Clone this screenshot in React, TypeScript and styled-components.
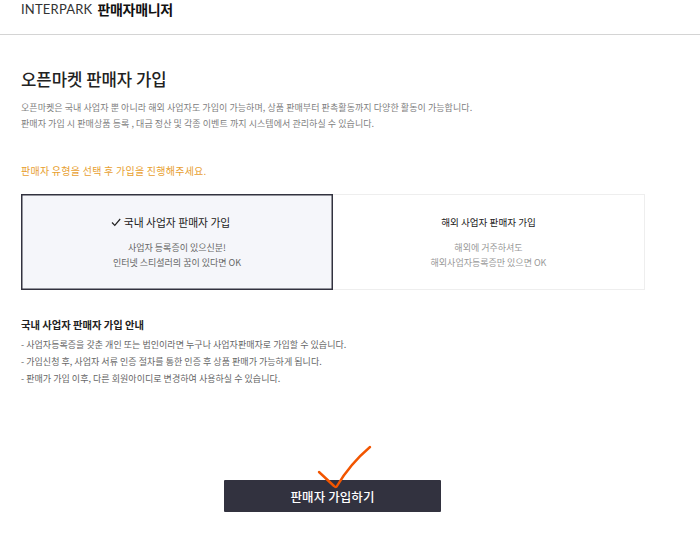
import React from "react";
import styled, { createGlobalStyle } from "styled-components";

const Global = createGlobalStyle`
  html, body { margin: 0; padding: 0; background: #fff; }
  body { font-family: "Noto Sans CJK KR", "Noto Sans", sans-serif; width: 700px; height: 536px; overflow: hidden; }
`;

const Header = styled.header`
  box-sizing: border-box;
  height: 35px;
  border-bottom: 1px solid #d4d4d4;
  padding: 1px 0 0 21px;
  display: flex;
  align-items: flex-start;
  gap: 5px;
`;
const Brand = styled.span`
  font-family: "Lato", sans-serif;
  font-size: 13px;
  line-height: 17px;
  color: #333;
  letter-spacing: 0.2px;
  font-weight: 400;
`;
const BrandKo = styled.span`
  font-size: 14px;
  line-height: 17px;
  font-weight: 700;
  color: #111;
  letter-spacing: -0.3px;
`;
const Main = styled.main`
  padding: 32px 0 0 21px;
  width: 624px;
`;
const Title = styled.h1`
  margin: 0;
  font-size: 16.7px;
  line-height: 24px;
  font-weight: 500;
  color: #222;
`;
const Intro = styled.p`
  margin: 9px 0 0;
  font-size: 9px;
  line-height: 16px;
  color: #808080;
  white-space: nowrap;
  letter-spacing: 0.06px;
`;
const Notice = styled.p`
  margin: 31px 0 0;
  font-size: 10px;
  line-height: 16px;
  color: #e8a02f;
  letter-spacing: 0.25px;
`;
const Options = styled.div`
  display: flex;
  margin-top: 15px;
  height: 96px;
`;
const Option = styled.div<{ $active?: boolean }>`
  box-sizing: border-box;
  width: 312px;
  height: 96px;
  border: ${(p) => (p.$active ? "1px solid #32323f" : "1px solid #eee")};
  border-left-width: ${(p) => (p.$active ? "1px" : "0")};
  background: ${(p) => (p.$active ? "#f5f6fa" : "#fff")};
  box-shadow: ${(p) => (p.$active ? "inset 0 0 0 0.5px #32323f" : "none")};
  text-align: center;
  padding-top: 18px;
`;
const OptionTitle = styled.div<{ $active?: boolean }>`
  font-size: ${(p) => (p.$active ? "10.8px" : "9.6px")};
  line-height: 18px;
  color: #222;
  display: flex;
  justify-content: center;
  align-items: center;
  gap: 3px;
`;
const CheckIcon = styled.svg`
  margin-left: -13px;
  flex: none;
`;
const OptionText = styled.div<{ $muted?: boolean }>`
  margin-top: 9px;
  font-size: 9px;
  line-height: 15px;
  color: ${(p) => (p.$muted ? "#999" : "#666")};
`;
const GuideTitle = styled.h2`
  margin: 28px 0 0;
  font-size: 10.3px;
  line-height: 14px;
  font-weight: 700;
  color: #222;
`;
const GuideList = styled.ul`
  list-style: none;
  margin: 4px 0 0;
  padding: 0;
`;
const GuideItem = styled.li`
  font-size: 9px;
  line-height: 17px;
  color: #666;
  white-space: nowrap;
  letter-spacing: 0.03px;
`;
const ButtonRow = styled.div`
  display: flex;
  justify-content: center;
  margin: 93px 0 0 -21px;
  width: 665px;
`;
const SubmitWrap = styled.div`
  position: relative;
  width: 217px;
  height: 32px;
`;
const Submit = styled.button`
  width: 217px;
  height: 32px;
  border: 0;
  border-radius: 1px;
  background: #32323f;
  color: #fff;
  font-family: inherit;
  font-size: 12.5px;
  font-weight: 500;
  letter-spacing: 0.1px;
  padding: 0;
`;
const Mark = styled.svg`
  position: absolute;
  left: 92px;
  top: -36px;
  width: 60px;
  height: 50px;
  pointer-events: none;
`;

export default function App() {
  return (
    <>
      <Global />
      <Header>
        <Brand>INTERPARK</Brand>
        <BrandKo>판매자매니저</BrandKo>
      </Header>
      <Main>
        <Title>오픈마켓 판매자 가입</Title>
        <Intro>
          오픈마켓은 국내 사업자 뿐 아니라 해외 사업자도 가입이 가능하며, 상품 판매부터 판촉활동까지 다양한 활동이 가능합니다.
          <br />
          판매자 가입 시 판매상품 등록 , 대금 정산 및 각종 이벤트 까지 시스템에서 관리하실 수 있습니다.
        </Intro>
        <Notice>판매자 유형을 선택 후 가입을 진행해주세요.</Notice>
        <Options>
          <Option $active>
            <OptionTitle $active>
              <CheckIcon width="10" height="9" viewBox="0 0 10 9" fill="none" stroke="#222" strokeWidth="1.2">
                <path d="M1 4.5 L3.8 7.3 L9.2 1" />
              </CheckIcon>
              국내 사업자 판매자 가입
            </OptionTitle>
            <OptionText>
              사업자 등록증이 있으신분!
              <br />
              인터넷 스티셜러의 꿈이 있다면 OK
            </OptionText>
          </Option>
          <Option>
            <OptionTitle>해외 사업자 판매자 가입</OptionTitle>
            <OptionText $muted>
              해외에 거주하셔도
              <br />
              해외사업자등록증만 있으면 OK
            </OptionText>
          </Option>
        </Options>
        <GuideTitle>국내 사업자 판매자 가입 안내</GuideTitle>
        <GuideList>
          <GuideItem>- 사업자등록증을 갖춘 개인 또는 법인이라면 누구나 사업자판매자로 가입할 수 있습니다.</GuideItem>
          <GuideItem>- 가입신청 후, 사업자 서류 인증 절차를 통한 인증 후 상품 판매가 가능하게 됩니다.</GuideItem>
          <GuideItem>- 판매가 가입 이후, 다른 회원아이디로 변경하여 사용하실 수 있습니다.</GuideItem>
        </GuideList>
        <ButtonRow>
          <SubmitWrap>
            <Submit>판매자 가입하기</Submit>
            <Mark viewBox="0 0 60 50" fill="none" stroke="#f25500" strokeWidth="2.4" strokeLinecap="round" strokeLinejoin="round">
              <path d="M3 28 L18 42 Q20 44 21 42 Q34 20 54 3" />
            </Mark>
          </SubmitWrap>
        </ButtonRow>
      </Main>
    </>
  );
}
